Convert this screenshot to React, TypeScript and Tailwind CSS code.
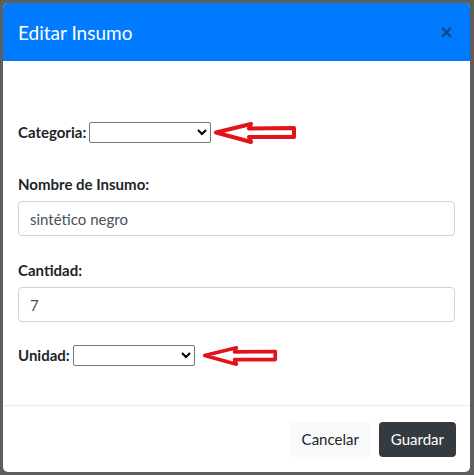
import { useState } from "react";

function RedArrow({ width }: { width: number }) {
    // outlined arrow pointing left, drawn like a hand-made annotation
    return (
        <svg width={width} height="22" viewBox="0 0 84 22" className="shrink-0">
            <polygon
                points="3,10.5 38,2 36,6.5 81,6 81,15 36,15 38,20"
                fill="white"
                stroke="#e3131b"
                strokeWidth="4"
                strokeLinejoin="round"
            />
        </svg>
    );
}

export default function App() {
    const [nombre, setNombre] = useState("sintético negro");
    const [cantidad, setCantidad] = useState("7");

    return (
        <div className="h-[475px] w-[474px] bg-[#5e5e5e] p-[3px] pr-[4px]" style={{ fontFamily: "Lato, 'Open Sans', sans-serif" }}>
            <div className="flex h-[469px] flex-col overflow-hidden rounded-[5px] bg-white">
                <div className="flex h-[58px] shrink-0 items-center justify-between bg-[#007bff] pl-[15px] pr-[17px]">
                    <h5 className="text-[19px] leading-none text-white">Editar Insumo</h5>
                    <button className="text-[22px] leading-none font-bold text-[#143f78] opacity-90">×</button>
                </div>

                <div className="flex-1 px-[15px] pt-[61px]">
                    <div className="flex h-[21px] items-center">
                        <label className="text-[15px] font-bold text-[#212529]">Categoria:</label>
                        <select className="ml-[3px] h-[21px] w-[122px] rounded-[2px] border border-[#767676] bg-white text-sm"></select>
                        <span className="ml-[2px]"><RedArrow width={84} /></span>
                    </div>

                    <label className="mt-[31px] block text-[15px] leading-[20px] font-bold text-[#212529]">Nombre de Insumo:</label>
                    <input
                        className="mt-[7px] block h-[35px] w-full rounded border border-[#ced4da] px-[11px] text-[15px] text-[#495057]"
                        value={nombre}
                        onChange={(e) => setNombre(e.target.value)}
                    />

                    <label className="mt-[24px] block text-[15px] leading-[20px] font-bold text-[#212529]">Cantidad:</label>
                    <input
                        className="mt-[7px] block h-[35px] w-full rounded border border-[#ced4da] px-[11px] text-[15px] text-[#495057]"
                        value={cantidad}
                        onChange={(e) => setCantidad(e.target.value)}
                    />

                    <div className="mt-[23px] flex h-[21px] items-center">
                        <label className="text-[15px] font-bold text-[#212529]">Unidad:</label>
                        <select className="ml-[3px] h-[21px] w-[122px] rounded-[2px] border border-[#767676] bg-white text-sm"></select>
                        <span className="ml-[7px]"><RedArrow width={76} /></span>
                    </div>
                </div>

                <div className="flex h-[67px] shrink-0 items-center justify-end gap-[8px] border-t border-[#e9ecef] pr-[14px]">
                    <button className="h-[35px] rounded bg-[#f8f9fa] px-[12px] text-[15px] text-[#212529]">Cancelar</button>
                    <button className="h-[35px] rounded bg-[#343a40] px-[12px] text-[15px] text-white">Guardar</button>
                </div>
            </div>
        </div>
    );
}
